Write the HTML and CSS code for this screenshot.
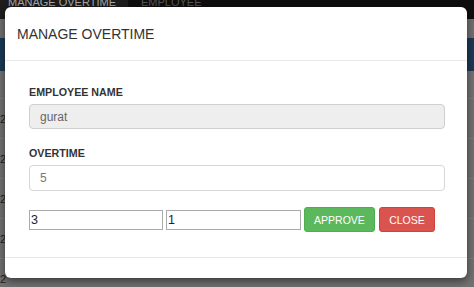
FILE: index.html
```html
<!DOCTYPE html>
<html>
<head>
<meta charset="utf-8">
<link rel="stylesheet" href="styles.css">
</head>
<body>
<div class="page">
  <nav class="topnav">
    <span class="nav-item active">MANAGE OVERTIME</span>
    <span class="nav-item">EMPLOYEE</span>
  </nav>
  <div class="subbar"></div>
  <div class="band"></div>
  <div class="spacer"></div>
  <div class="rows">
    <div class="row-line"><span class="cell">2</span></div>
    <div class="row-line"><span class="cell">2</span></div>
    <div class="row-line"><span class="cell">2</span></div>
    <div class="row-line"><span class="cell">2</span></div>
    <div class="row-line"><span class="cell">2</span></div>
  </div>
</div>

<div class="modal">
  <div class="modal-header">
    <h4 class="modal-title">MANAGE OVERTIME</h4>
  </div>
  <div class="modal-body">
    <label class="field-label">EMPLOYEE NAME</label>
    <div class="field readonly">gurat</div>
    <label class="field-label second">OVERTIME</label>
    <div class="field tall">5</div>
    <div class="action-row">
      <input class="plain-input wide" type="text" value="3">
      <input class="plain-input wider" type="text" value="1">
      <button class="btn btn-approve">APPROVE</button>
      <button class="btn btn-close">CLOSE</button>
    </div>
  </div>
  <div class="modal-footer"></div>
</div>
</body>
</html>
```
FILE: styles.css
```css
html, body {
  margin: 0;
  padding: 0;
}
body {
  width: 474px;
  height: 287px;
  overflow: hidden;
  background: #6f6f6f;
  font-family: "Liberation Sans", Arial, sans-serif;
  position: relative;
}
.page {
  display: flex;
  flex-direction: column;
}
.topnav {
  height: 19px;
  background: #0e0e0e;
  display: flex;
  overflow: hidden;
}
.nav-item {
  font-size: 11px;
  line-height: 12px;
  margin-top: -4px;
  color: #565656;
  padding: 0 0 0 13px;
  height: 23px;
}
.nav-item.active {
  background: #1d1d1d;
  color: #a8a8a8;
  padding: 0 12px 0 8px;
}
.subbar {
  height: 19px;
  background: #707070;
}
.band {
  height: 33px;
  background: #1b3a56;
}
.spacer {
  height: 27px;
  background: #727272;
}
.rows {
  display: flex;
  flex-direction: column;
}
.row-line {
  height: 39px;
  border-top: 1px solid #7d7d7d;
  background: #717171;
  display: flex;
  align-items: center;
}
.cell {
  font-size: 11px;
  color: #1e1e1e;
  margin-left: 0;
}

.modal {
  position: absolute;
  left: 5px;
  top: 7px;
  width: 462px;
  height: 271px;
  background: #fff;
  border-radius: 6px;
  box-shadow: 0 3px 9px rgba(0, 0, 0, 0.5);
  display: flex;
  flex-direction: column;
  overflow: hidden;
}
.modal-header {
  height: 53px;
  border-bottom: 1px solid #e8e8e8;
  display: flex;
  align-items: center;
  padding-left: 12px;
}
.modal-title {
  margin: 0;
  font-size: 14px;
  font-weight: normal;
  color: #333;
  line-height: 16px;
}
.modal-body {
  padding: 24px 22px 25px 24px;
  display: flex;
  flex-direction: column;
}
.field-label {
  display: block;
  font-size: 10.7px;
  font-weight: bold;
  line-height: 14px;
  color: #333;
  margin-bottom: 5px;
}
.field-label.second {
  margin-top: 17px;
}
.field {
  box-sizing: border-box;
  height: 25px;
  border: 1px solid #cfcfcf;
  border-radius: 4px;
  padding-left: 10px;
  font-size: 12px;
  color: #666;
  display: flex;
  align-items: center;
  background: #fff;
}
.field.readonly {
  background: #eee;
}
.field.tall {
  height: 26px;
  border-color: #d6d6d6;
  color: #777;
}
.action-row {
  margin-top: 16px;
  height: 25px;
  display: flex;
  align-items: center;
  gap: 3px;
}
.plain-input {
  box-sizing: border-box;
  height: 20px;
  border: 1px solid #aaa;
  border-radius: 0;
  padding: 0 1px;
  margin: 0;
  font-family: "Liberation Sans", Arial, sans-serif;
  font-size: 12.5px;
  color: #222;
  outline: none;
}
.plain-input.wide {
  width: 134px;
}
.plain-input.wider {
  width: 135px;
}
.btn {
  box-sizing: border-box;
  height: 25px;
  border-radius: 3px;
  border: 1px solid transparent;
  color: #fff;
  font-family: "Liberation Sans", Arial, sans-serif;
  font-size: 10.5px;
  padding: 0;
  margin: 0;
}
.btn-approve {
  width: 71px;
  background: #5cb85c;
  border-color: #4cae4c;
}
.btn-close {
  width: 56px;
  margin-left: 1px;
  background: #d9534f;
  border-color: #d43f3a;
}
.modal-footer {
  flex: 1;
  border-top: 1px solid #e8e8e8;
}
```
